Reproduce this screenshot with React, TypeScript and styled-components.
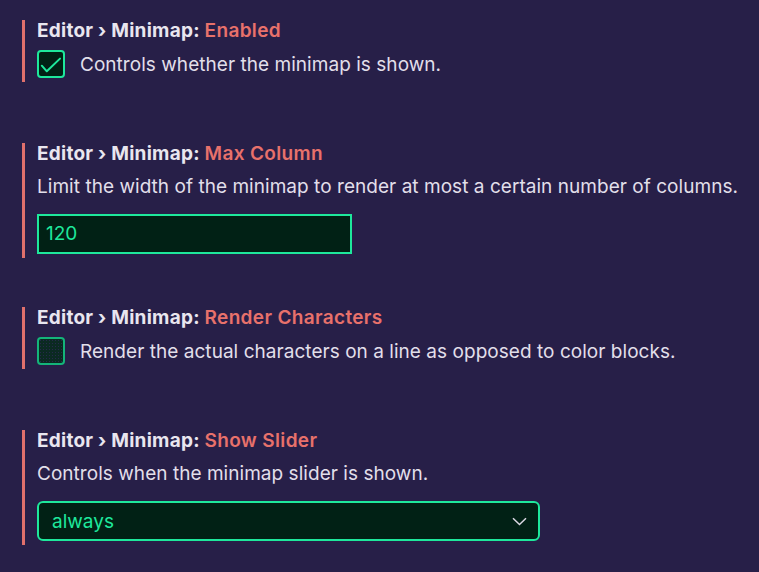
import React from "react";
import styled, { createGlobalStyle } from "styled-components";

const Global = createGlobalStyle`
  html, body {
    margin: 0;
    padding: 0;
    background: #271f48;
  }
  body {
    font-family: Inter, "Noto Sans", "Liberation Sans", sans-serif;
    -webkit-font-smoothing: antialiased;
  }
`;

const Page = styled.div`
  width: 759px;
  height: 572px;
  box-sizing: border-box;
  padding: 20px 0 0 22px;
  background: #271f48;
  overflow: hidden;
`;

const Item = styled.section<{ $gap: number }>`
  border-left: 3px solid #e0706c;
  padding: 0 0 4px 12px;
  margin-bottom: ${(p) => p.$gap}px;
  display: flex;
  flex-direction: column;
  align-items: flex-start;
`;

const Title = styled.div`
  font-size: 19px;
  line-height: 21px;
  font-weight: 700;
  letter-spacing: 0.25px;
  color: #e9e6ef;
  white-space: nowrap;
`;

const Key = styled.span`
  color: #e8716b;
  font-weight: 600;
  letter-spacing: 0.35px;
`;

const Desc = styled.div`
  margin-top: 12px;
  font-size: 19px;
  line-height: 21px;
  letter-spacing: 0.04px;
  color: #e2dfea;
  white-space: nowrap;
`;

const CheckRow = styled.label`
  margin-top: 9px;
  display: flex;
  align-items: center;
  gap: 15px;
  font-size: 19px;
  line-height: 21px;
  letter-spacing: 0.04px;
  color: #e2dfea;
  white-space: nowrap;
`;

const Box = styled.span<{ $checked: boolean }>`
  width: 28px;
  height: 28px;
  box-sizing: border-box;
  border: 2px solid ${(p) => (p.$checked ? "#1ee89c" : "#14b47a")};
  border-radius: 4px;
  background-color: ${(p) => (p.$checked ? "#012115" : "#0b2a22")};
  background-image: ${(p) =>
    p.$checked
      ? "none"
      : "radial-gradient(circle, rgba(60,40,110,0.55) 0.6px, transparent 0.9px)"};
  background-size: 3px 3px;
  display: flex;
  align-items: center;
  justify-content: center;
  flex: none;
`;

const TextInput = styled.div`
  margin-top: 17px;
  width: 315px;
  height: 40px;
  box-sizing: border-box;
  border: 2px solid #1ee89c;
  background: #012115;
  color: #1ee89c;
  font-size: 19px;
  line-height: 36px;
  padding: 0 7px;
`;

const Select = styled.div`
  margin-top: 17px;
  width: 503px;
  height: 40px;
  box-sizing: border-box;
  border: 2px solid #1ee89c;
  border-radius: 6px;
  background: #012115;
  color: #1ee89c;
  font-size: 19px;
  display: flex;
  align-items: center;
  justify-content: space-between;
  padding: 0 11px 0 13px;
`;

const Chevron = () => (
  <svg width="15" height="9" viewBox="0 0 15 9" fill="none">
    <path d="M1 1.2L7.5 7.5L14 1.2" stroke="#dcd8e4" strokeWidth="1.5" />
  </svg>
);

const Check = () => (
  <svg width="24" height="24" viewBox="0 0 24 24" fill="none" style={{ marginTop: 2 }}>
    <path
      d="M2.8 12.7L7.8 18.3L21 5.6"
      stroke="#1ee89c"
      strokeWidth="2"
      strokeLinecap="round"
      strokeLinejoin="round"
    />
  </svg>
);

export default function App() {
  return (
    <>
      <Global />
      <Page>
        <Item $gap={61}>
          <Title>
            Editor › Minimap: <Key>Enabled</Key>
          </Title>
          <CheckRow>
            <Box $checked>
              <Check />
            </Box>
            Controls whether the minimap is shown.
          </CheckRow>
        </Item>
        <Item $gap={49}>
          <Title>
            Editor › Minimap: <Key>Max Column</Key>
          </Title>
          <Desc>
            Limit the width of the minimap to render at most a certain number of columns.
          </Desc>
          <TextInput>120</TextInput>
        </Item>
        <Item $gap={61}>
          <Title>
            Editor › Minimap: <Key>Render Characters</Key>
          </Title>
          <CheckRow>
            <Box $checked={false} />
            Render the actual characters on a line as opposed to color blocks.
          </CheckRow>
        </Item>
        <Item $gap={0}>
          <Title>
            Editor › Minimap: <Key>Show Slider</Key>
          </Title>
          <Desc>Controls when the minimap slider is shown.</Desc>
          <Select>
            always
            <Chevron />
          </Select>
        </Item>
      </Page>
    </>
  );
}
